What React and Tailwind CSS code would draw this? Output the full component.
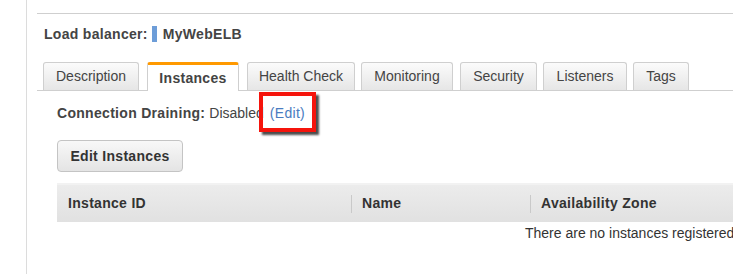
import React from 'react';

const tabs = [
  { label: 'Description', w: 'w-[96px] ml-0' },
  { label: 'Instances', w: 'w-[92px] ml-[8px]', active: true },
  { label: 'Health Check', w: 'w-[108px] ml-[8px]' },
  { label: 'Monitoring', w: 'w-[92px] ml-[6px]' },
  { label: 'Security', w: 'w-[77px] ml-[7px]' },
  { label: 'Listeners', w: 'w-[84px] ml-[6px]' },
  { label: 'Tags', w: 'w-[56px] ml-[6px]' },
];

export default function App() {
  return (
    <div className="w-[733px] h-[274px] overflow-hidden bg-white flex font-['Liberation_Sans',Arial,sans-serif] text-[14px] text-[#444]">
      {/* left gutter */}
      <div className="w-[27px] shrink-0 border-r border-[#dcdcdc]" />

      <div className="flex-1 pl-[10px] min-w-0">
        <div className="mt-[13px] border-t border-[#cfcfcf]" />

        {/* title */}
        <div className="flex items-center h-[16px] mt-[12px] pl-[7px] font-bold leading-[16px] tracking-[0.3px]">
          <span>Load balancer:</span>
          <span className="ml-[4px] w-[5px] h-[16px] bg-[#6d9dd8]" />
          <span className="ml-[6px]">MyWebELB</span>
        </div>

        {/* tabs */}
        <div className="mt-[20px] flex items-end pl-[6px] border-b border-[#cfcfcf] h-[29px]">
          {tabs.map((t) =>
            t.active ? (
              <div
                key={t.label}
                className={`${t.w} h-[29px] -mb-px flex items-center justify-center bg-white border border-[#cfcfcf] border-b-0 border-t-[3px] border-t-[#f90] rounded-t-[3px] font-bold tracking-[0.3px] text-[#444]`}
              >
                {t.label}
              </div>
            ) : (
              <div
                key={t.label}
                className={`${t.w} h-[28px] flex items-center justify-center bg-gradient-to-b from-[#fbfbfb] to-[#e6e6e6] border border-[#cfcfcf] border-b-0 rounded-t-[3px] text-[#444]`}
              >
                {t.label}
              </div>
            )
          )}
        </div>

        {/* tab body */}
        <div className="pl-[20px]">
          <div className="relative mt-[14px] h-[16px] leading-[16px] flex whitespace-nowrap">
            <span className="font-bold tracking-[0.3px]">Connection Draining:</span>
            <span className="ml-[4px]">Disabled</span>
            <span className="ml-[6px] text-[#4a7cc0] tracking-[0.3px]">(Edit)</span>
            <div className="absolute left-[202px] top-[-13px] w-[57px] h-[40px] border-[4px] border-[#f5140c] shadow-[3px_3px_2px_rgba(0,0,0,0.7)]" />
          </div>

          <button className="mt-[19px] w-[126px] h-[32px] rounded-[4px] border border-[#c4c4c4] bg-gradient-to-b from-[#f8f8f8] to-[#e4e4e4] font-bold tracking-[0.3px] text-[#333] text-[14px]">
            Edit Instances
          </button>

          <div className="mt-[11px] h-[39px] flex items-center bg-gradient-to-b from-[#ececec] to-[#e1e1e1] border-t-[2px] border-[#f2f2f2] font-bold tracking-[0.3px] text-[#333]">
            <div className="w-[294px] shrink-0 pl-[11px]">Instance ID</div>
            <div className="w-[179px] shrink-0 flex items-center">
              <span className="w-px h-[18px] bg-[#c9c9c9]" />
              <span className="ml-[10px]">Name</span>
            </div>
            <div className="flex-1 flex items-center whitespace-nowrap">
              <span className="w-px h-[18px] bg-[#c9c9c9]" />
              <span className="ml-[10px]">Availability Zone</span>
            </div>
          </div>

          <div className="mt-[3px] pl-[468px] whitespace-nowrap text-[#333] leading-[16px]">
            There are no instances registered to this load balancer.
          </div>
        </div>
      </div>
    </div>
  );
}
